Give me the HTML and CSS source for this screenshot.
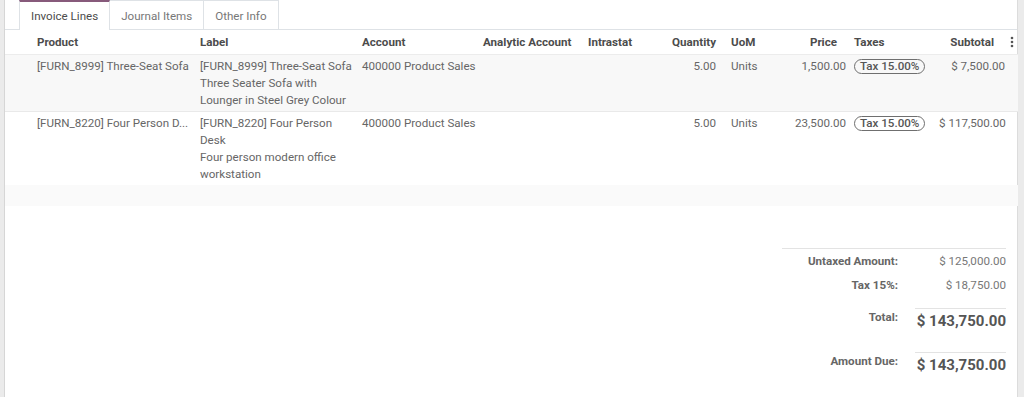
FILE: index.html
```html
<!DOCTYPE html>
<html>
<head>
<meta charset="utf-8">
<link rel="stylesheet" href="styles.css">
</head>
<body>
<div class="sheet">
  <ul class="tabs">
    <li class="tab active">Invoice Lines</li>
    <li class="tab">Journal Items</li>
    <li class="tab">Other Info</li>
  </ul>
  <table class="lines">
    <colgroup>
      <col class="c-handle"><col class="c-product"><col class="c-label"><col class="c-account"><col class="c-analytic"><col class="c-intrastat"><col class="c-qty"><col class="c-uom"><col class="c-price"><col class="c-taxes"><col class="c-subtotal"><col class="c-opt">
    </colgroup>
    <thead>
      <tr>
        <th></th>
        <th>Product</th>
        <th>Label</th>
        <th>Account</th>
        <th>Analytic Account</th>
        <th>Intrastat</th>
        <th class="num">Quantity</th>
        <th class="uom">UoM</th>
        <th class="num hprice">Price</th>
        <th>Taxes</th>
        <th class="num hsub">Subtotal</th>
        <th class="opt"><svg width="4" height="12" viewBox="0 0 4 12"><circle cx="2" cy="2" r="1.3" fill="#555"/><circle cx="2" cy="6" r="1.3" fill="#555"/><circle cx="2" cy="10" r="1.3" fill="#555"/></svg></th>
      </tr>
    </thead>
    <tbody>
      <tr class="row shaded">
        <td></td>
        <td class="trunc">[FURN_8999] Three-Seat Sofa</td>
        <td>[FURN_8999] Three-Seat Sofa<br>Three Seater Sofa with<br>Lounger in Steel Grey Colour</td>
        <td>400000 Product Sales</td>
        <td></td>
        <td></td>
        <td class="num">5.00</td>
        <td class="uom">Units</td>
        <td class="num">1,500.00</td>
        <td><span class="badge">Tax 15.00%</span></td>
        <td class="num">$ 7,500.00</td>
        <td></td>
      </tr>
      <tr class="row second">
        <td></td>
        <td class="trunc">[FURN_8220] Four Person D...</td>
        <td>[FURN_8220] Four Person<br>Desk<br>Four person modern office<br>workstation</td>
        <td>400000 Product Sales</td>
        <td></td>
        <td></td>
        <td class="num">5.00</td>
        <td class="uom">Units</td>
        <td class="num">23,500.00</td>
        <td><span class="badge">Tax 15.00%</span></td>
        <td class="num">$ 117,500.00</td>
        <td></td>
      </tr>
      <tr class="empty"><td colspan="12"></td></tr>
    </tbody>
  </table>
  <div class="totals">
    <div class="trow first">
      <div class="tlabel">Untaxed Amount:</div>
      <div class="tval">$ 125,000.00</div>
    </div>
    <div class="trow">
      <div class="tlabel">Tax 15%:</div>
      <div class="tval">$ 18,750.00</div>
    </div>
    <div class="trow big total">
      <div class="tlabel">Total:</div>
      <div class="tval">$ 143,750.00</div>
    </div>
    <div class="trow big due">
      <div class="tlabel">Amount Due:</div>
      <div class="tval">$ 143,750.00</div>
    </div>
  </div>
</div>
</body>
</html>
```

FILE: styles.css
```css
html, body {
  margin: 0;
  padding: 0;
  height: 100%;
}
body {
  background: #ebebeb;
  font-family: Roboto, "Liberation Sans", Arial, sans-serif;
  font-size: 11.6px;
  color: #666666;
  overflow: hidden;
}
.sheet {
  margin: 0 6px 0 4px;
  background: #ffffff;
  border-left: 1px solid #d6d6d6;
  border-right: 1px solid #dcdcdc;
  height: 100%;
  box-sizing: border-box;
}
.tabs {
  list-style: none;
  margin: 0;
  padding: 0 0 0 14px;
  display: flex;
  align-items: flex-start;
  border-bottom: 1px solid #dee2e6;
  height: 29px;
}
.tab {
  padding: 0 11px;
  height: 29px;
  line-height: 30px;
  box-sizing: border-box;
  border: 1px solid #dee2e6;
  border-left: none;
  border-bottom: none;
  color: #777777;
  background: #ffffff;
  white-space: nowrap;
}
.tab.active {
  border-left: 1px solid #dee2e6;
  border-top: 2px solid #875a7b;
  line-height: 28px;
  height: 30px;
  color: #4c4c4c;
}
.lines {
  width: 1013px;
  table-layout: fixed;
  border-collapse: collapse;
}
.c-handle { width: 28px; }
.c-product { width: 163px; }
.c-label { width: 162px; }
.c-account { width: 121px; }
.c-analytic { width: 105px; }
.c-intrastat { width: 70px; }
.c-qty { width: 66px; }
.c-uom { width: 70px; }
.c-price { width: 60px; }
.c-taxes { width: 85px; }
.c-subtotal { width: 74px; }
.c-opt { width: 9px; }
.lines th {
  text-align: left;
  font-weight: bold;
  color: #4c4c4c;
  height: 24px;
  padding: 0 4px;
  white-space: nowrap;
  border-bottom: 1px solid #ececec;
}
.lines th.opt {
  padding: 0;
  text-align: left;
}
.lines th.opt svg {
  display: block;
  margin-left: 1px;
}
.lines td {
  padding: 3px 4px 2px;
  vertical-align: top;
  line-height: 17px;
  white-space: nowrap;
}
.lines td.trunc {
  overflow: hidden;
  text-overflow: ellipsis;
}
.lines .num { text-align: right; }
.lines .uom { padding-left: 11px; }
.lines th.hprice { padding-right: 13px; }
.lines th.hsub { padding-right: 15px; }
.row.shaded td { background: #f8f8f8; }
.row td { border-bottom: 1px solid #e9e9e9; }
.row.second td { padding-top: 3px; padding-bottom: 2px; border-bottom: none; }
.badge {
  display: inline-block;
  border: 1.5px solid #6f6f6f;
  border-radius: 9px;
  padding: 0 5px;
  line-height: 13px;
  color: #555555;
  font-weight: 500;
}
.empty td {
  height: 21px;
  background: #fafafa;
  padding: 0;
  border: none;
}
.totals {
  width: 224px;
  margin: 42px 11px 0 auto;
  border-top: 1px solid #e3e3e3;
}
.trow {
  display: flex;
  align-items: flex-start;
}
.tlabel {
  width: 116px;
  text-align: right;
  font-weight: bold;
  color: #666666;
  line-height: 24px;
}
.tval {
  flex: 1;
  margin-left: 17px;
  text-align: right;
  line-height: 24px;
  color: #777777;
}
.trow.big .tval {
  border-top: 1px solid #e3e3e3;
  font-size: 15px;
  font-weight: bold;
  color: #555555;
  line-height: 22px;
  padding-top: 1px;
}
.trow.big .tlabel {
  line-height: 16px;
}
.trow.total { margin-top: 11px; }
.trow.total .tlabel { padding-top: 1px; }
.trow.due { margin-top: 20px; }
.trow.due .tlabel { padding-top: 1px; }
```
